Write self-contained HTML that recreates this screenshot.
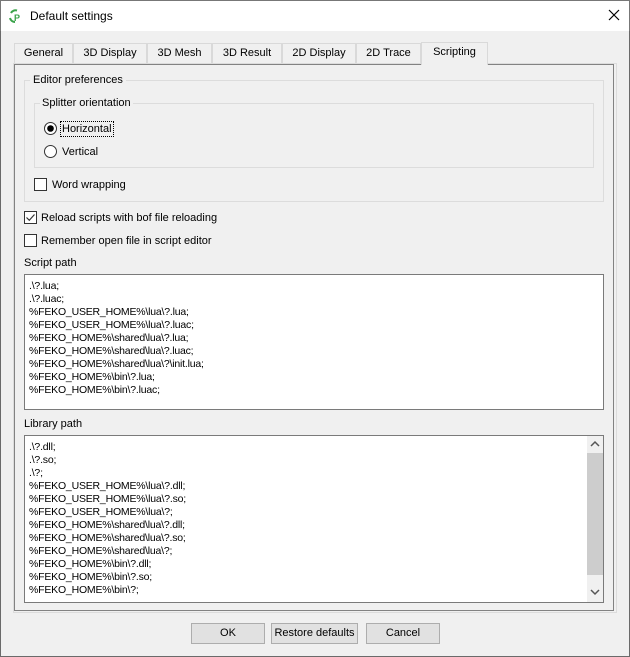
<!DOCTYPE html>
<html><head><meta charset="utf-8"><style>
*{margin:0;padding:0;box-sizing:border-box}
body{width:630px;height:657px;background:#f0f0f0;font-family:"Liberation Sans",sans-serif;font-size:11px;color:#000;position:relative;overflow:hidden;white-space:nowrap}
.a{position:absolute}
.title{left:0;top:0;width:630px;height:31px;background:#fff;border:1px solid #777;border-bottom:none}
.win{left:0;top:0;width:630px;height:657px;border:1px solid #6a6a6a}
.tab{top:43px;height:20px;border:1px solid #d9d9d9;border-bottom:none;text-align:center;line-height:19px;background:#f0f0f0}
.grp{border:1px solid #dcdcdc}
.cb{width:13px;height:13px;border:1px solid #333;background:#fff}
.mono{font-size:10.5px;line-height:13px;white-space:pre;letter-spacing:-0.2px}
.btn{top:623px;height:21px;border:1px solid #adadad;background:#e1e1e1;text-align:center;line-height:19px}
</style></head><body>
<div class="a win"></div>
<div class="a title"></div>
<svg class="a" style="left:9px;top:9px" width="14" height="14" viewBox="0 0 14 14"><path d="M2 4 A5 5 0 0 1 8 1.5" stroke="#3aa34a" stroke-width="2" fill="none"/><path d="M1 9 A5 5 0 0 0 6 13" stroke="#3aa34a" stroke-width="2" fill="none"/><text x="5" y="12" font-size="9" font-weight="bold" fill="#3aa34a" font-family="Liberation Sans">P</text></svg>
<div class="a" style="left:30px;top:9px;font-size:12px">Default settings</div>
<svg class="a" style="left:608px;top:9px" width="12" height="12"><path d="M1 1L11 11M11 1L1 11" stroke="#000" stroke-width="1.2"/></svg>

<div class="a tab" style="left:14px;width:59px">General</div>
<div class="a tab" style="left:73px;width:74px">3D Display</div>
<div class="a tab" style="left:147px;width:65px">3D Mesh</div>
<div class="a tab" style="left:212px;width:70px">3D Result</div>
<div class="a tab" style="left:282px;width:74px">2D Display</div>
<div class="a tab" style="left:356px;width:65px">2D Trace</div>
<div class="a" style="left:13px;top:63px;width:604px;height:550px;border:1px solid #dcdcdc"></div>
<div class="a" style="left:14px;top:64px;width:600px;height:547px;border:1px solid #828282"></div>
<div class="a tab" style="left:421px;top:42px;width:67px;height:23px;background:#f0f0f0;border-color:#d9d9d9">Scripting</div>

<div class="a grp" style="left:24px;top:80px;width:580px;height:122px"></div>
<div class="a" style="left:30px;top:74px;padding:0 3px;background:#f0f0f0">Editor preferences</div>
<div class="a grp" style="left:34px;top:103px;width:560px;height:65px"></div>
<div class="a" style="left:40px;top:97px;padding:0 2px;background:#f0f0f0">Splitter orientation</div>
<svg class="a" style="left:44px;top:122px" width="13" height="13"><circle cx="6.5" cy="6.5" r="6" fill="#fff" stroke="#333"/><circle cx="6.5" cy="6.5" r="3.3" fill="#000"/></svg>
<div class="a" style="left:60px;top:121px;border:1px dotted #000;padding:0 1px;line-height:14px">Horizontal</div>
<svg class="a" style="left:44px;top:145px" width="13" height="13"><circle cx="6.5" cy="6.5" r="6" fill="#fff" stroke="#333"/></svg>
<div class="a" style="left:62px;top:146px">Vertical</div>
<div class="a cb" style="left:34px;top:178px"></div>
<div class="a" style="left:52px;top:179px">Word wrapping</div>

<div class="a cb" style="left:24px;top:211px"></div>
<svg class="a" style="left:24px;top:211px" width="13" height="13"><path d="M2.5 6.5L5.3 9.3L10.5 3.5" stroke="#333" stroke-width="1.2" fill="none"/></svg>
<div class="a" style="left:41px;top:212px">Reload scripts with bof file reloading</div>
<div class="a cb" style="left:24px;top:234px"></div>
<div class="a" style="left:41px;top:235px">Remember open file in script editor</div>
<div class="a" style="left:24px;top:257px">Script path</div>
<div class="a" style="left:24px;top:274px;width:580px;height:136px;background:#fff;border:1px solid #7a7a7a"></div>
<div class="a mono" style="left:29px;top:280px">.\?.lua;
.\?.luac;
%FEKO_USER_HOME%\lua\?.lua;
%FEKO_USER_HOME%\lua\?.luac;
%FEKO_HOME%\shared\lua\?.lua;
%FEKO_HOME%\shared\lua\?.luac;
%FEKO_HOME%\shared\lua\?\init.lua;
%FEKO_HOME%\bin\?.lua;
%FEKO_HOME%\bin\?.luac;</div>
<div class="a" style="left:24px;top:418px">Library path</div>
<div class="a" style="left:24px;top:435px;width:580px;height:168px;background:#fff;border:1px solid #7a7a7a"></div>
<div class="a" style="left:587px;top:436px;width:16px;height:166px;background:#f0f0f0"></div>
<div class="a" style="left:587px;top:453px;width:16px;height:122px;background:#cdcdcd"></div>
<svg class="a" style="left:590px;top:440px" width="10" height="8"><path d="M1 6L5 2L9 6" stroke="#555" stroke-width="1.5" fill="none"/></svg>
<svg class="a" style="left:590px;top:588px" width="10" height="8"><path d="M1 2L5 6L9 2" stroke="#555" stroke-width="1.5" fill="none"/></svg>
<div class="a mono" style="left:29px;top:441px">.\?.dll;
.\?.so;
.\?;
%FEKO_USER_HOME%\lua\?.dll;
%FEKO_USER_HOME%\lua\?.so;
%FEKO_USER_HOME%\lua\?;
%FEKO_HOME%\shared\lua\?.dll;
%FEKO_HOME%\shared\lua\?.so;
%FEKO_HOME%\shared\lua\?;
%FEKO_HOME%\bin\?.dll;
%FEKO_HOME%\bin\?.so;
%FEKO_HOME%\bin\?;</div>

<div class="a btn" style="left:191px;width:74px">OK</div>
<div class="a btn" style="left:271px;width:87px">Restore defaults</div>
<div class="a btn" style="left:366px;width:74px">Cancel</div>
</body></html>
